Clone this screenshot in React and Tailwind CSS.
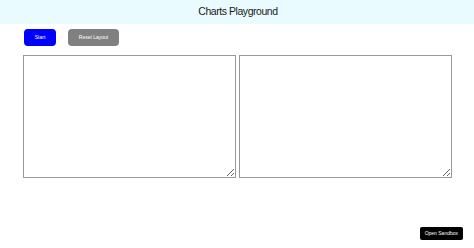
export default function App() {
   return (
      <div className="relative min-h-[248px] bg-white font-['Liberation_Sans',Arial,sans-serif]">
         <header className="h-[24px] bg-[#e9fbfe] flex items-center justify-center">
            <h1 className="text-[10.5px] tracking-[-0.45px] text-[#1a1a1a] pl-[2px]">Charts Playground</h1>
         </header>

         <div className="flex items-center mt-[5px] pl-[24px] gap-[12px]">
            <button className="w-[32px] h-[17px] bg-[#0000ff] text-white text-[5px] rounded-[4px]">Start</button>
            <button className="w-[51px] h-[17px] bg-[#808080] text-white text-[5px] rounded-[4px]">Reset Layout</button>
         </div>

         <div className="flex gap-[3px] mt-[9px] pl-[23px]">
            <div className="w-[213px] h-[123px] border border-[#999] resize overflow-auto"></div>
            <div className="w-[213px] h-[123px] border border-[#999] resize overflow-auto"></div>
         </div>

         <button className="fixed right-[11px] bottom-[8px] h-[13px] px-[5px] bg-black text-white text-[5px] rounded-[2px]">Open Sandbox</button>
      </div>
   );
}
